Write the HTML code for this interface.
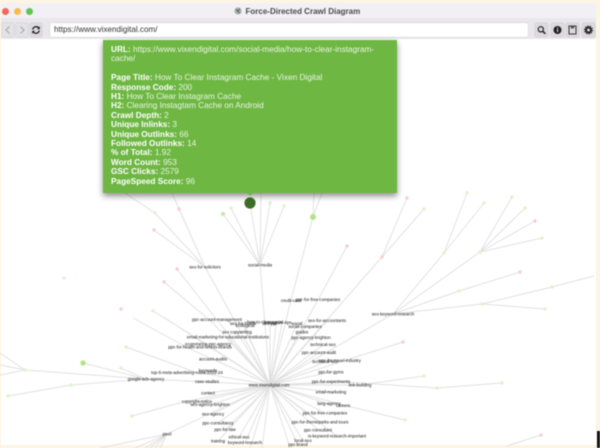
<!DOCTYPE html>
<html><head><meta charset="utf-8"><title>Force-Directed Crawl Diagram</title>
<style>
html,body{margin:0;padding:0;width:600px;height:448px;overflow:hidden;background:#fdf5e3}
#w{position:absolute;left:0;top:0;width:600px;height:448px;overflow:hidden;filter:blur(.5px);font-family:"Liberation Sans",sans-serif}
#win{position:absolute;left:1px;top:3px;width:595px;height:442px;overflow:hidden}
#bar{position:absolute;left:0;top:0;width:595px;height:36px;background:linear-gradient(#f2f0f5 0,#f2f0f5 15px,#e9e7ec 15px,#e9e7ec 36px)}
.l{position:absolute;top:5px;width:7px;height:7px;border-radius:50%}
#ttl{position:absolute;left:244.500px;top:2.500px;font-size:8px;line-height:12px;font-weight:bold;color:#4a4a4c;white-space:nowrap}
#url{position:absolute;left:49px;top:20px;width:478px;height:14px;background:#fff;border-radius:2px;box-shadow:0 0 0 .5px #d2d0d4;font-size:8.100px;line-height:14px;color:#333;text-indent:4px}
.b{position:absolute;top:20px;height:14px;width:13px;background:#dcdadd;border-radius:2px;box-shadow:0 0 0 .5px #ccc}
.b svg{position:absolute;left:0;top:0}
#tip{position:absolute;left:103px;top:40px;width:294px;height:153px;background:#6eb743;box-shadow:0 3px 6px rgba(0,0,0,.45);color:#eaf5e2;font-size:8.250px;line-height:9.400px;padding:5px 0 0 8px;box-sizing:border-box;white-space:nowrap}
#tip b{color:#fff}
#ptr{position:absolute;left:247px;top:193px;width:0;height:0;border-left:3px solid transparent;border-right:3px solid transparent;border-top:3px solid #6eb743}
#g{position:absolute;left:0;top:0}
#g text{font-family:"Liberation Sans",sans-serif;font-size:4.300px;fill:#111;text-anchor:middle}
#blk{position:absolute;left:597px;top:431px;width:3px;height:17px;background:#111}
</style></head><body>
<div id="w">
<svg id="g" width="600" height="448" viewBox="0 0 600 448" style="z-index:1">
<rect x="1" y="39" width="595" height="406" fill="#fff"/>
<path fill="none" stroke="#e0e0e0" stroke-width=".95" d="
M125 193L155 213L205 267M154 230L205 267M179 209L205 267M172 193L205 267L270 385
M223 214L260 265M231 208L260 265M270 203L260 265M284 206L260 265M250 203L260 265M261 193L260 265L270 385
M314 193L313 217L291 300L270 385M322 193L313 217
M347 246L318 300L270 385M407 198L382 257L340 305L270 385M424 209L382 257
M467 193L444 253L393 314M484 203L444 253
M512 197L480 252L393 314M525 208L480 252M535 221L480 252M542 238L480 252
M520 272L459 291L393 314M594 276L552 287L482 304L393 314M545 309L482 304M393 314L270 385
M177 269L217 320L270 385M164 282L212 322L270 385M153 311L195 337L270 385
M133 318L190 349L270 385M165 318L203 343L270 385
M83 363L146 379M121 368L146 379M126 347L195 372L270 385M0 353L25 370L146 379M0 365L25 370M0 375L25 370M8 396L71 385L146 379L270 385
M132 416L183 402L270 385M167 434L270 385M100 448L167 434M135 448L167 434M145 448L167 434M150 448L167 434M155 448L167 434M160 448L167 434
M403 342L340 362L270 385M424 376L360 385L270 385M502 383L437 388L345 382L270 385M405 420L343 405L270 385M541 435L507 446
M270 385L243 324M270 385L245 327M270 385L237 332M270 385L228 337M270 385L213 359M270 385L207 382M270 385L208 393M270 385L197 402M270 385L210 405M270 385L213 414M270 385L218 423M270 385L225 430M270 385L239 437M270 385L218 441M270 385L245 443M270 385L250 448M270 385L262 448M270 385L270 323M270 385L276 323M270 385L282 323M270 385L297 324M270 385L305 327M270 385L302 332M270 385L311 338M270 385L327 321M270 385L323 345M270 385L319 353M270 385L325 362M270 385L331 372M270 385L331 382M270 385L331 392M270 385L329 404M270 385L325 413M270 385L320 422M270 385L318 430M270 385L337 436M270 385L303 441M270 385L298 445M270 385L290 448"/>
<g fill="#f9cdd0">
<circle cx="179" cy="209" r="1.700"/><circle cx="154" cy="230" r="1.700"/><circle cx="177" cy="269" r="1.700"/><circle cx="164" cy="282" r="1.700"/><circle cx="121" cy="309" r="1.700"/><circle cx="347" cy="246" r="1.700"/><circle cx="407" cy="198" r="1.700"/><circle cx="382" cy="257" r="1.700"/><circle cx="535" cy="221" r="1.700"/><circle cx="520" cy="272" r="1.700"/><circle cx="403" cy="342" r="1.700"/><circle cx="541" cy="435" r="1.700"/>
</g>
<g fill="#dff3cb">
<circle cx="155" cy="213" r="1.700"/><circle cx="64" cy="278" r="1.700"/><circle cx="153" cy="311" r="1.700"/><circle cx="231" cy="208" r="1.700"/><circle cx="270" cy="203" r="1.700"/><circle cx="284" cy="206" r="1.700"/><circle cx="424" cy="209" r="1.700"/><circle cx="467" cy="193" r="1.700"/><circle cx="484" cy="203" r="1.700"/><circle cx="444" cy="253" r="1.700"/><circle cx="512" cy="197" r="1.700"/><circle cx="525" cy="208" r="1.700"/><circle cx="542" cy="238" r="1.700"/><circle cx="480" cy="252" r="1.700"/><circle cx="459" cy="291" r="1.700"/><circle cx="482" cy="304" r="1.700"/><circle cx="552" cy="287" r="1.700"/><circle cx="545" cy="309" r="1.700"/><circle cx="25" cy="370" r="1.700"/><circle cx="71" cy="385" r="1.700"/><circle cx="8" cy="396" r="1.700"/><circle cx="126" cy="347" r="1.700"/><circle cx="121" cy="368" r="1.700"/><circle cx="132" cy="416" r="1.700"/><circle cx="424" cy="376" r="1.700"/><circle cx="437" cy="388" r="1.700"/><circle cx="502" cy="383" r="1.700"/><circle cx="405" cy="420" r="1.700"/>
</g>
<circle cx="223" cy="214" r="2.200" fill="#c6eda4"/><circle cx="313" cy="217" r="3" fill="#b2e583"/><circle cx="83" cy="363" r="2.700" fill="#b2e583"/>
<circle cx="250" cy="203" r="5.600" fill="#3f6f26"/>
<text x="205" y="268.500">seo-for-solicitors</text><text x="260" y="266.500">social-media</text>
<text x="291" y="302">credit-card</text><text x="318" y="301">ppc-for-free-companies</text><text x="393" y="315.500">seo-keyword-research</text>
<text x="217" y="321">ppc-account-management</text><text x="243" y="325">seo-for-hotels</text><text x="245" y="327">ecological</text><text x="237" y="333.500">seo copywriting</text><text x="228" y="338.500">email-marketing-for-educational-institutions</text><text x="208" y="345.500">ecommerce-ppc-agency</text><text x="200" y="348.500">ppc-for-health-and-fitness-brands</text><text x="213" y="360.500">account-audits</text><text x="187" y="374">top-5-meta-advertising-costs-2022-24</text><text x="208" y="372">keywords</text><text x="146" y="380.500">google-ads-agency</text>
<text x="207" y="383">case-studies</text><text x="269" y="386.500">www.vixendigital.com</text><text x="208" y="394.500">contact</text><text x="197" y="403">copyright-notice</text><text x="210" y="406">seo-agency-brighton</text><text x="213" y="415.500">seo-agency</text><text x="218" y="424.500">ppc-consultancy</text><text x="225" y="431">ppc-for-law</text><text x="167" y="435.500">pixel</text><text x="239" y="438.500">ethical-seo</text><text x="218" y="442.500">training</text><text x="245" y="444">keyword-research</text>
<text x="265" y="323.500">how-to-clear-social</text><text x="278" y="324">instagram-tips</text><text x="270" y="325">seo-ppc</text><text x="297" y="325">social</text><text x="305" y="328">social-companies</text><text x="302" y="333.500">guides</text><text x="327" y="322">seo-for-accountants</text><text x="311" y="339">ppc-agency-brighton</text><text x="323" y="346">technical-seo</text><text x="319" y="354">ppc-account-audit</text><text x="340" y="362">ppc-for-travel-industry</text><text x="325" y="363">technical-seo</text><text x="331" y="373.500">ppc-for-gyms</text><text x="331" y="383">ppc-for-experiments</text><text x="360" y="386.500">link-building</text><text x="331" y="393.500">email-marketing</text><text x="329" y="405">lang-agency</text><text x="343" y="407">careers</text><text x="325" y="414.500">ppc-for-free-companies</text><text x="320" y="423.500">ppc-for-themeparks-and-tours</text><text x="318" y="431.500">ppc-consultant</text><text x="337" y="437.500">is-keyword-research-important</text><text x="303" y="442">local-seo</text><text x="298" y="446">ppc-brand</text>
</svg>
<div id="win" style="z-index:2">
<div id="bar">
<div class="l" style="left:1px;background:#ee6a5f"></div><div class="l" style="left:13px;background:#f5bd4f"></div><div class="l" style="left:25px;background:#61c454"></div>
<svg style="position:absolute;left:232px;top:3px" width="10" height="10"><circle cx="5" cy="5" r="3.600" fill="#a9b3a6"/><path d="M3 3L7 7M7 2.500L4 6" stroke="#556" stroke-width=".8"/></svg>
<div id="ttl">Force-Directed Crawl Diagram</div>
<div class="b" style="left:1px;background:#e3e2e5;width:12px"><svg width="12" height="14"><path d="M7.500 3.500L4 7L7.500 10.500" fill="none" stroke="#aaa" stroke-width="1.200"/></svg></div>
<div class="b" style="left:15px;background:#e3e2e5;width:12px"><svg width="12" height="14"><path d="M4.500 3.500L8 7L4.500 10.500" fill="none" stroke="#aaa" stroke-width="1.200"/></svg></div>
<div class="b" style="left:29px;width:12px"><svg width="12" height="14"><path d="M2.800 6.500A3.300 3.300 0 0 1 9 5.500M9.200 7.500A3.300 3.300 0 0 1 3 8.500" fill="none" stroke="#222" stroke-width="1.300"/><path d="M9.800 3.300V6.200H7zM2.200 10.700V7.800H5z" fill="#222"/></svg></div>
<div id="url">https://www.vixendigital.com/</div>
<div class="b" style="left:534px"><svg width="13" height="14"><circle cx="5.800" cy="6.300" r="2.600" fill="none" stroke="#222" stroke-width="1.200"/><path d="M7.800 8.300L10.300 10.800" stroke="#222" stroke-width="1.500"/></svg></div>
<div class="b" style="left:550px"><svg width="13" height="14"><circle cx="6.500" cy="7" r="4" fill="#222"/><rect x="6" y="6" width="1.100" height="3" fill="#ddd"/><rect x="6" y="4.400" width="1.100" height="1" fill="#ddd"/></svg></div>
<div class="b" style="left:565px"><svg width="13" height="14"><rect x="3" y="3" width="7" height="8" fill="none" stroke="#333" stroke-width="1"/><rect x="4.800" y="3.300" width="3.400" height="2.200" fill="#555"/></svg></div>
<div class="b" style="left:581px"><svg width="13" height="14"><circle cx="6.500" cy="7" r="2.500" fill="none" stroke="#222" stroke-width="2"/><circle cx="6.500" cy="7" r="4" fill="none" stroke="#222" stroke-width="1.100" stroke-dasharray="1.300 1.200"/></svg></div>
</div>
</div>
<div id="tip" style="z-index:3"><b>URL:</b> https://www.vixendigital.com/social-media/how-to-clear-instagram-<br>cache/<br><br><b>Page Title:</b> How To Clear Instagram Cache - Vixen Digital<br><b>Response Code:</b> 200<br><b>H1:</b> How To Clear Instagram Cache<br><b>H2:</b> Clearing Instagtam Cache on Android<br><b>Crawl Depth:</b> 2<br><b>Unique Inlinks:</b> 3<br><b>Unique Outlinks:</b> 66<br><b>Followed Outlinks:</b> 14<br><b>% of Total:</b> 1.92<br><b>Word Count:</b> 953<br><b>GSC Clicks:</b> 2579<br><b>PageSpeed Score:</b> 96</div>
<div id="ptr" style="z-index:3"></div>
<div id="blk" style="z-index:4"></div>
</div>
</body></html>
